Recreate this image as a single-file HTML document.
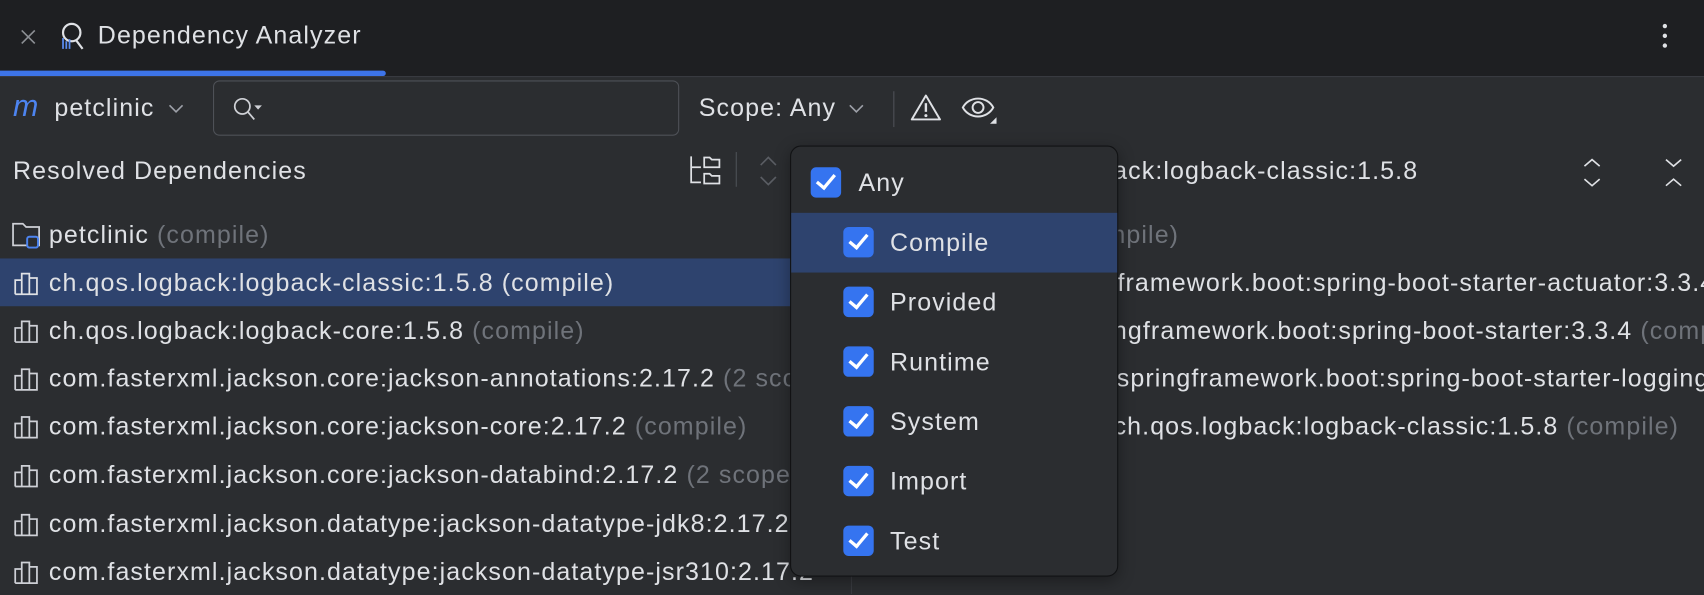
<!DOCTYPE html>
<html><head><style>
html,body{margin:0;padding:0;background:#2b2d30;overflow:hidden;width:1704px;height:594px}
#w{position:absolute;left:0;top:0;width:1568px;height:547px;transform:scale(1.08673,1.0859);transform-origin:0 0;background:#2b2d30;font-family:"Liberation Sans",sans-serif;color:#dfe1e5;font-size:23px;letter-spacing:1px}
.a{position:absolute;white-space:nowrap}
.g{color:#6f737a}
.row{position:absolute;height:44px;line-height:44px;white-space:nowrap}
svg{position:absolute;overflow:visible}
.cb{position:absolute;width:28px;height:28px;background:#3574f0;border-radius:5px}
.cb:after{content:"";position:absolute;left:9px;top:3px;width:7px;height:14px;border:solid #fff;border-width:0 3px 3px 0;transform:rotate(40deg)}
</style></head><body><div id="w">
<div class="a" style="left:0;top:0;width:1568px;height:70px;background:#1e1f22"></div>
<div class="a" style="left:0;top:65px;width:355px;height:5px;background:#3d74e8;border-radius:0 3px 3px 0"></div>
<div class="a" style="left:0;top:70px;width:1568px;height:1px;background:#393b40"></div>
<svg style="left:19px;top:27px" width="14" height="14"><path d="M1 1L13 13M13 1L1 13" stroke="#8c8f94" stroke-width="1.5"/></svg>
<svg style="left:52px;top:19px" width="26" height="28"><circle cx="14" cy="11" r="8" fill="none" stroke="#dfe1e5" stroke-width="2"/><path d="M18 18L24 26" stroke="#dfe1e5" stroke-width="2"/><path d="M6 16v10M9 19v7M12 17v9" stroke="#5a8cf0" stroke-width="1.6"/></svg>
<div class="a" style="left:90px;top:19px">Dependency Analyzer</div>
<svg style="left:1528px;top:21px" width="8" height="26"><circle cx="4" cy="3" r="2" fill="#dfe1e5"/><circle cx="4" cy="12" r="2" fill="#dfe1e5"/><circle cx="4" cy="21" r="2" fill="#dfe1e5"/></svg>
<div class="a" style="left:12px;top:82px;font-size:28px;font-style:italic;color:#4d84f0;letter-spacing:0">m</div>
<div class="a" style="left:50px;top:86px">petclinic</div>
<svg style="left:155px;top:96px" width="14" height="8"><path d="M1 1L7 7L13 1" fill="none" stroke="#9da0a8" stroke-width="1.5"/></svg>
<div class="a" style="left:196px;top:74px;width:429px;height:51px;border:1px solid #4e5157;border-radius:6px;box-sizing:border-box"></div>
<svg style="left:214px;top:89px" width="30" height="24"><circle cx="9" cy="9" r="7" fill="none" stroke="#cfd1d6" stroke-width="1.6"/><path d="M14 14L20 21" stroke="#cfd1d6" stroke-width="1.6"/><path d="M20 8h7l-3.5 4z" fill="#cfd1d6"/></svg>
<div class="a" style="left:643px;top:86px">Scope: Any</div>
<svg style="left:781px;top:96px" width="14" height="8"><path d="M1 1L7 7L13 1" fill="none" stroke="#9da0a8" stroke-width="1.5"/></svg>
<div class="a" style="left:822px;top:84px;width:1px;height:33px;background:#4e5157"></div>
<svg style="left:837px;top:86px" width="30" height="26"><path d="M15 2L28 24H2Z" fill="none" stroke="#dfe1e5" stroke-width="1.8" stroke-linejoin="round"/><path d="M15 9v8" stroke="#dfe1e5" stroke-width="2.2"/><circle cx="15" cy="20.5" r="1.4" fill="#dfe1e5"/></svg>
<svg style="left:884px;top:88px" width="36" height="28"><path d="M2 11C8 0 24 0 30 11C24 22 8 22 2 11Z" fill="none" stroke="#dfe1e5" stroke-width="1.8"/><circle cx="16" cy="11" r="5" fill="none" stroke="#dfe1e5" stroke-width="1.8"/><path d="M33 20v6h-6z" fill="#dfe1e5"/></svg>
<div class="a" style="left:12px;top:144px">Resolved Dependencies</div>
<svg style="left:634px;top:143px" width="30" height="30"><path d="M2 1v24h9M2 11h9" fill="none" stroke="#dfe1e5" stroke-width="1.6"/><path d="M14 2h5l2 2h7v7H14z M14 17h5l2 2h7v7H14z" fill="none" stroke="#dfe1e5" stroke-width="1.6"/></svg>
<div class="a" style="left:677px;top:140px;width:1px;height:32px;background:#4e5157"></div>
<svg style="left:698px;top:144px" width="18" height="28"><path d="M2 8L9 1L16 8M2 19L9 26L16 19" fill="none" stroke="#5a5d63" stroke-width="1.5"/></svg>
<div class="a" style="left:783px;top:134px;width:1px;height:413px;background:#393b40"></div>
<svg style="left:11px;top:203px" width="28" height="26"><path d="M1 3h9l3 3h12v17H1z" fill="none" stroke="#ced0d6" stroke-width="1.6"/><rect x="14" y="15" width="10" height="10" rx="2" fill="#2b2d30" stroke="#4d84f0" stroke-width="1.8"/></svg>
<div class="row" style="top:194px;left:45px">petclinic <span class="g">(compile)</span></div>
<div class="a" style="left:0;top:238px;width:783px;height:44px;background:#2e436e"></div>
<div class="row" style="top:238px;left:45px">ch.qos.logback:logback-classic:1.5.8 (compile)</div>
<div class="row" style="top:282px;left:45px">ch.qos.logback:logback-core:1.5.8 <span class="g">(compile)</span></div>
<div class="row" style="top:326px;left:45px">com.fasterxml.jackson.core:jackson-annotations:2.17.2 <span class="g">(2 scopes)</span></div>
<div class="row" style="top:370px;left:45px">com.fasterxml.jackson.core:jackson-core:2.17.2 <span class="g">(compile)</span></div>
<div class="row" style="top:415px;left:45px">com.fasterxml.jackson.core:jackson-databind:2.17.2 <span class="g">(2 scopes)</span></div>
<div class="row" style="top:460px;left:45px">com.fasterxml.jackson.datatype:jackson-datatype-jdk8:2.17.2</div>
<div class="row" style="top:504px;left:45px">com.fasterxml.jackson.datatype:jackson-datatype-jsr310:2.17.2</div>
<svg style="left:13px;top:250px" width="24" height="22"><path d="M1 21V8h6v13M7 21V2h7v19M14 21V6h7v15H1" fill="none" stroke="#dfe1e5" stroke-width="1.6"/></svg>
<svg style="left:13px;top:294px" width="24" height="22"><path d="M1 21V8h6v13M7 21V2h7v19M14 21V6h7v15H1" fill="none" stroke="#ced0d6" stroke-width="1.6"/></svg>
<svg style="left:13px;top:338px" width="24" height="22"><path d="M1 21V8h6v13M7 21V2h7v19M14 21V6h7v15H1" fill="none" stroke="#ced0d6" stroke-width="1.6"/></svg>
<svg style="left:13px;top:382px" width="24" height="22"><path d="M1 21V8h6v13M7 21V2h7v19M14 21V6h7v15H1" fill="none" stroke="#ced0d6" stroke-width="1.6"/></svg>
<svg style="left:13px;top:427px" width="24" height="22"><path d="M1 21V8h6v13M7 21V2h7v19M14 21V6h7v15H1" fill="none" stroke="#ced0d6" stroke-width="1.6"/></svg>
<svg style="left:13px;top:472px" width="24" height="22"><path d="M1 21V8h6v13M7 21V2h7v19M14 21V6h7v15H1" fill="none" stroke="#ced0d6" stroke-width="1.6"/></svg>
<svg style="left:13px;top:516px" width="24" height="22"><path d="M1 21V8h6v13M7 21V2h7v19M14 21V6h7v15H1" fill="none" stroke="#ced0d6" stroke-width="1.6"/></svg>
<div class="a" style="right:263px;top:144px">ch.qos.logback:logback-classic:1.5.8</div>
<svg style="left:1456px;top:146px" width="18" height="26"><path d="M2 7L9 1L16 7M2 19L9 25L16 19" fill="none" stroke="#dfe1e5" stroke-width="1.5"/></svg>
<svg style="left:1531px;top:146px" width="18" height="26"><path d="M2 1L9 7L16 1M2 25L9 19L16 25" fill="none" stroke="#dfe1e5" stroke-width="1.5"/></svg>
<div class="row" style="top:194px;right:483px">petclinic <span class="g">(compile)</span></div>
<div class="row" style="top:238px;left:916px">org.springframework.boot:spring-boot-starter-actuator:3.3.4</div>
<div class="row" style="top:282px;right:-45px">org.springframework.boot:spring-boot-starter:3.3.4 <span class="g">(compile)</span></div>
<div class="row" style="top:326px;left:984px">org.springframework.boot:spring-boot-starter-logging</div>
<div class="row" style="top:370px;right:23px">ch.qos.logback:logback-classic:1.5.8 <span class="g">(compile)</span></div>
<div class="a" style="left:727px;top:134px;width:302px;height:397px;background:#2b2d30;border:1px solid #111214;border-radius:10px;box-sizing:border-box;box-shadow:0 4px 14px rgba(0,0,0,.35);overflow:hidden">
<div class="a" style="left:0;top:61px;width:302px;height:55px;background:#2e436e"></div>
<div class="cb" style="left:18px;top:19px"></div><div class="a" style="left:62px;top:20px">Any</div>
<div class="cb" style="left:48px;top:74px"></div><div class="a" style="left:91px;top:75px">Compile</div>
<div class="cb" style="left:48px;top:129px"></div><div class="a" style="left:91px;top:130px">Provided</div>
<div class="cb" style="left:48px;top:184px"></div><div class="a" style="left:91px;top:185px">Runtime</div>
<div class="cb" style="left:48px;top:239px"></div><div class="a" style="left:91px;top:240px">System</div>
<div class="cb" style="left:48px;top:294px"></div><div class="a" style="left:91px;top:295px">Import</div>
<div class="cb" style="left:48px;top:349px"></div><div class="a" style="left:91px;top:350px">Test</div>
</div>
</div></body></html>
